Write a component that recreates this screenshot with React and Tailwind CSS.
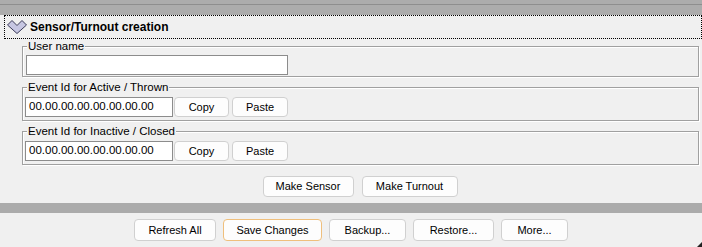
import React from 'react';

const font = "font-['Liberation_Sans',Arial,sans-serif]";

function PushButton({ label, className = '', focused = false }) {
  return (
    <button
      type="button"
      className={`flex items-center justify-center rounded-[4px] bg-[#fdfdfd] text-[11px] leading-none text-black ${
        focused ? 'border border-[#efbf7c]' : 'border border-[#d0d0d0]'
      } ${className}`}
    >
      {label}
    </button>
  );
}

function Group({ title, children, first = false }) {
  return (
    <fieldset
      className={`ml-[22px] w-[677px] border border-[#a0a0a0] pl-[2px] shadow-[1px_1px_0_#ffffff,inset_1px_1px_0_#ffffff] ${
        first ? 'pt-[2px] pb-[1px]' : 'mt-[3px] pt-[3px] pb-[3px]'
      }`}
    >
      <legend className="ml-[2px] bg-[#f0f0f0] px-[1px] text-[11.5px] leading-[14px] text-black">
        {title}
      </legend>
      {children}
    </fieldset>
  );
}

function EventRow() {
  return (
    <div className="flex items-center">
      <div className="flex h-[20px] w-[148px] items-center border border-[#8c8c8c] bg-white pl-[3px] text-[11.5px] text-black">
        00.00.00.00.00.00.00.00
      </div>
      <PushButton label="Copy" className="ml-[1px] h-[20px] w-[55px]" />
      <PushButton label="Paste" className="ml-[3px] h-[20px] w-[56px]" />
    </div>
  );
}

export default function App() {
  return (
    <div className={`relative h-[247px] w-[702px] overflow-hidden bg-[#f0f0f0] ${font}`}>
      {/* top splitter */}
      <div className="h-[4px] bg-[#acacac]" />
      <div className="h-[1px] bg-[#8e8e8e]" />
      <div className="h-[10px] bg-[#acacac]" />

      {/* collapsible header */}
      <div className="ml-[4px] flex h-[24px] items-center border border-dotted border-black">
        <svg width="20" height="14" viewBox="0 0 20 14" className="ml-[2px]">
          <polygon
            points="0.5,5 5,0.5 10,5.5 15,0.5 19.5,5 10,13.5"
            fill="#c6c6e2"
            stroke="#3a3a58"
            strokeWidth="1"
            strokeLinejoin="miter"
          />
        </svg>
        <span className="ml-[3px] text-[12px] font-bold text-black">Sensor/Turnout creation</span>
      </div>

      <Group title="User name" first>
        <div className="ml-[1px] h-[20px] w-[262px] border border-[#8c8c8c] bg-white" />
      </Group>

      <Group title="Event Id for Active / Thrown">
        <EventRow />
      </Group>

      <Group title="Event Id for Inactive / Closed">
        <EventRow />
      </Group>

      <div className="mt-[11px] flex justify-center gap-[8px] pl-[18px]">
        <PushButton label="Make Sensor" className="h-[21px] w-[91px]" />
        <PushButton label="Make Turnout" className="h-[21px] w-[96px]" />
      </div>

      <div className="mt-[6px] h-[10px] bg-[#ababab]" />

      <div className="mt-[6px] flex justify-center gap-[7px]">
        <PushButton label="Refresh All" className="h-[22px] w-[82px]" />
        <PushButton label="Save Changes" className="h-[22px] w-[99px]" focused />
        <PushButton label="Backup..." className="h-[22px] w-[77px]" />
        <PushButton label="Restore..." className="h-[22px] w-[81px]" />
        <PushButton label="More..." className="h-[22px] w-[67px]" />
      </div>

      {/* resize grip */}
      <svg width="5" height="5" viewBox="0 0 5 5" className="absolute bottom-0 right-0">
        <polygon points="5,0 5,5 0,5" fill="#222222" />
      </svg>
    </div>
  );
}
